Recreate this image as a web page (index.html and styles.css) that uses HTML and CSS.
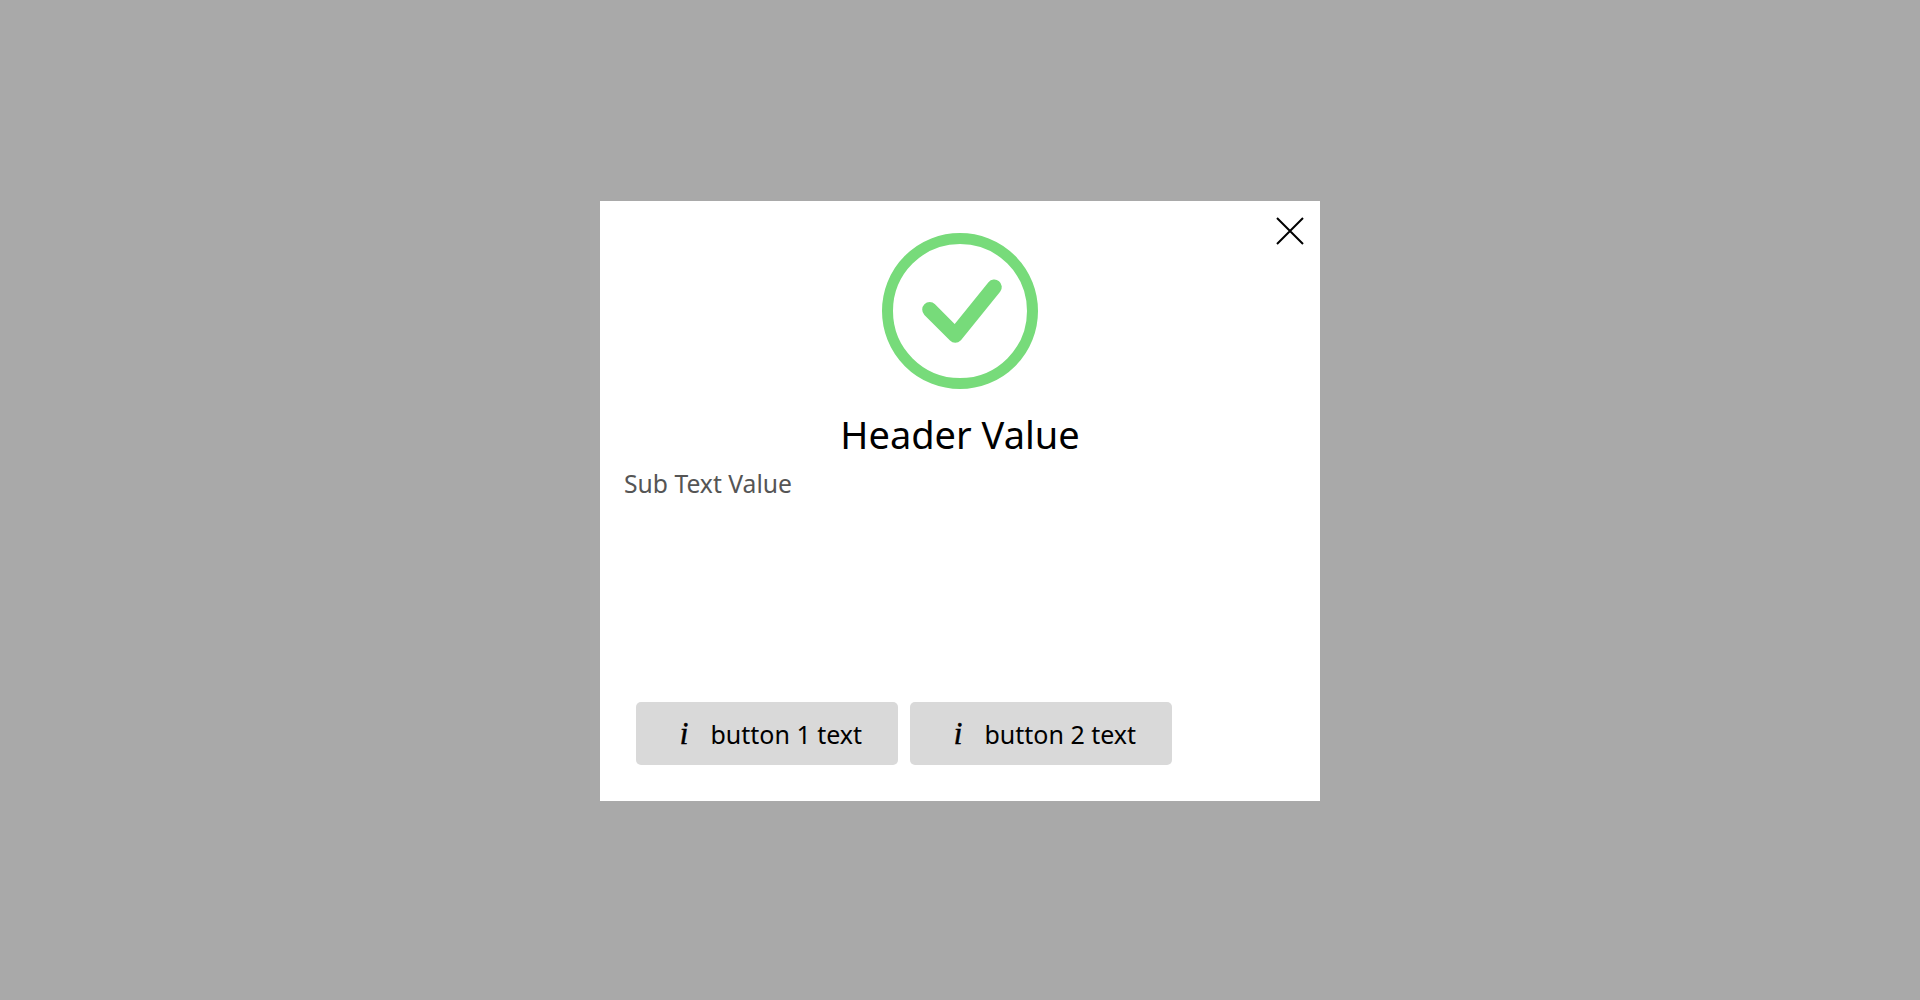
FILE: index.html
```html
<!DOCTYPE html>
<html lang="en">
<head>
    <meta charset="UTF-8">
    <title>Dialog</title>
    <link rel="stylesheet" href="styles.css">
</head>
<body>
    <div class="overlay">
        <div class="dialog">
            <button class="close" type="button" aria-label="Close">
                <svg width="28" height="28" viewBox="0 0 28 28">
                    <path d="M1 1L27 27M27 1L1 27" fill="none" stroke="#000" stroke-width="2"/>
                </svg>
            </button>
            <svg class="status-icon" width="156" height="156" viewBox="0 0 156 156">
                <circle cx="78" cy="78" r="72.5" fill="none" stroke="#77db7a" stroke-width="11"/>
                <path d="M47.7 76.6L73.3 102.3L112.3 54" fill="none" stroke="#77db7a" stroke-width="15" stroke-linecap="round" stroke-linejoin="round"/>
            </svg>
            <h1 class="header">Header Value</h1>
            <p class="sub-text">Sub Text Value</p>
            <div class="buttons">
                <button class="action" type="button"><span class="action-icon">i</span>button 1 text</button>
                <button class="action" type="button"><span class="action-icon">i</span>button 2 text</button>
            </div>
        </div>
    </div>
</body>
</html>
```

FILE: styles.css
```css
body {
    margin: 0;
    font-family: "Noto Sans", "Open Sans", sans-serif;
    background-color: #a9a9a9;
}
.overlay {
    height: 1000px;
    box-sizing: border-box;
    padding-top: 201px;
    display: flex;
    justify-content: center;
    align-items: flex-start;
}
.dialog {
    position: relative;
    width: 720px;
    height: 600px;
    box-sizing: border-box;
    padding: 32px 24px 36px;
    background-color: #fff;
    display: flex;
    flex-direction: column;
}
.close {
    position: absolute;
    top: 16px;
    right: 16px;
    width: 28px;
    height: 28px;
    padding: 0;
    border: none;
    background: none;
    display: flex;
}
.status-icon {
    align-self: center;
    flex: none;
}
.header {
    margin: 20px 0 0;
    font-size: 38px;
    line-height: 50px;
    font-weight: 400;
    color: #000;
    text-align: center;
}
.sub-text {
    margin: 9px 0 0;
    font-size: 24.7px;
    line-height: 32px;
    color: #555;
}
.buttons {
    margin-top: auto;
    padding-left: 12px;
    display: flex;
    gap: 12px;
}
.action {
    width: 262px;
    height: 63px;
    padding: 0 0 0 8px;
    border: none;
    border-radius: 5px;
    background-color: #d9d9d9;
    color: #000;
    font-family: "Noto Sans", sans-serif;
    font-size: 25px;
    display: flex;
    align-items: center;
    justify-content: center;
}
.action-icon {
    margin-right: 22px;
    font-family: "Liberation Serif", serif;
    font-style: italic;
    font-weight: 400;
    font-size: 31px;
    -webkit-text-stroke: 0.5px #000;
}
```
